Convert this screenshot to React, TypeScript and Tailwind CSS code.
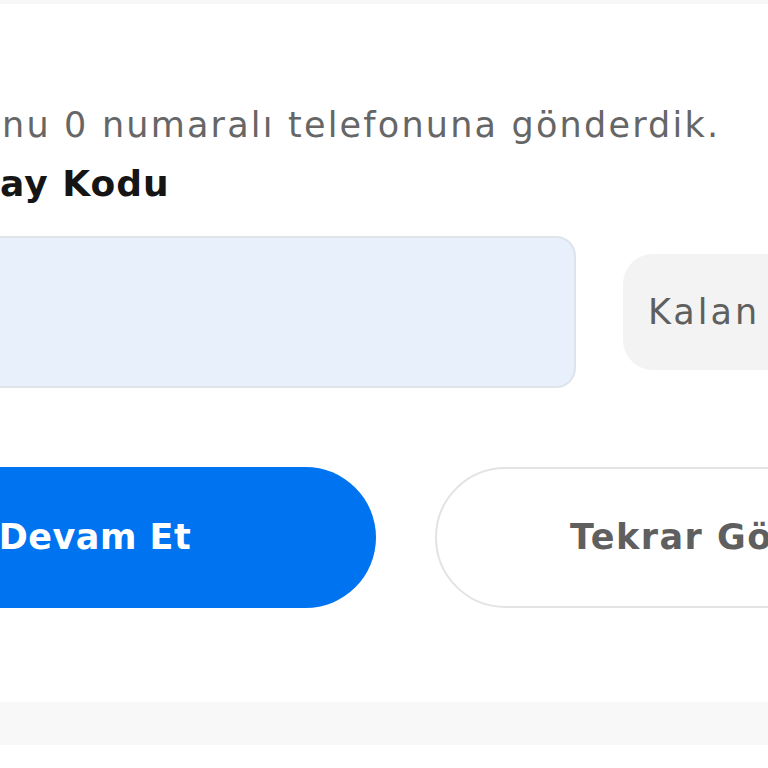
import React from "react";

export default function App() {
  return (
    <div
      className="w-[768px] h-[768px] overflow-hidden bg-white flex flex-col"
      style={{ fontFamily: "'DejaVu Sans', 'Noto Sans', sans-serif" }}
    >
      <div className="h-[4px] bg-[#f7f7f7] shrink-0" />
      <div className="flex flex-col pt-[99px]">
        <p className="text-[35px] leading-[44px] tracking-[2.2px] text-[#666666] pl-[2px] whitespace-nowrap">
          nu 0 numaralı telefonuna gönderdik.
        </p>
        <h2 className="mt-[12px] text-[36px] leading-[50px] font-bold tracking-[1px] text-[#151515] whitespace-nowrap">
          ay Kodu
        </h2>
        <div className="flex items-center gap-[47px] mt-[27px]">
          <div className="-ml-[60px] w-[636px] h-[152px] shrink-0 rounded-[20px] bg-[#e8f0fc] border-2 border-[#dfe3ea]" />
          <div className="shrink-0 w-[300px] h-[116px] rounded-[30px] bg-[#f3f3f3] flex items-center pl-[25px]">
            <span className="text-[35px] tracking-[3px] text-[#5f5f5f] whitespace-nowrap">Kalan</span>
          </div>
        </div>
        <div className="flex items-center gap-[59px] mt-[79px]">
          <button className="-ml-[186px] w-[562px] h-[141px] shrink-0 rounded-full bg-[#0073f0] text-white text-[35px] tracking-[0.5px] font-bold flex items-center justify-center whitespace-nowrap">
            Devam Et
          </button>
          <button className="w-[540px] h-[141px] shrink-0 rounded-full bg-white border-2 border-[#e3e3e3] text-[#5f5f5f] text-[35px] tracking-[1.5px] font-bold flex items-center pl-[133px] whitespace-nowrap">
            Tekrar Gö
          </button>
        </div>
      </div>
      <div className="mt-[94px] h-[43px] bg-[#f8f8f8] shrink-0" />
    </div>
  );
}
